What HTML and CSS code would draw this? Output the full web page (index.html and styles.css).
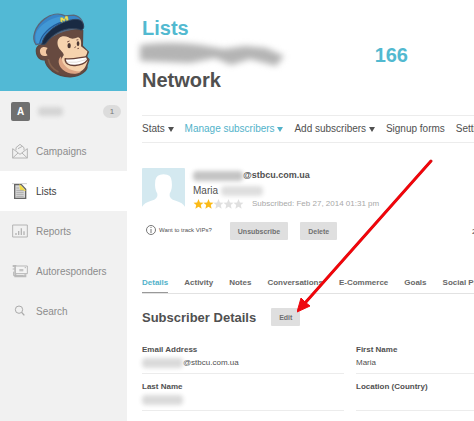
FILE: index.html
```html
<!DOCTYPE html>
<html lang="en">
<head>
	<meta charset="UTF-8">
	<title>Lists</title>
	<link rel="stylesheet" href="styles.css">
</head>
<body>

<div class="page">

	<!-- Sidebar -->
	<div class="sidebar">
		<div class="logo">
			<svg viewBox="0 0 384 276" role="img" aria-label="Logo">
				<!-- head and ear -->
				<path d="M137 134C121 132 109 140 110 155C111 174 124 184 136 180C139 207 170 231 211 232C245 233 265 211 263 198L269 180L261 172L267 157L249 139L250 92C218 82 153 99 137 134Z" fill="#674a40" stroke="#5b4741" stroke-width="4" stroke-linejoin="round"/>
				<path d="M144 145C130 137 119 145 121 157C122 168 133 173 144 167C137 161 137 153 144 145Z" fill="#f3c8a3"/>
				<path d="M174 133C172 112 190 105 207 113C218 121 226 116 236 113C246 116 246 129 245 140L264 155C264 164 259 169 257 172L267 181C261 190 262 202 250 212C232 229 203 220 191 203C179 189 186 176 193 166C190 153 176 151 174 133Z" fill="#f6d3ae"/>
				<path d="M184 171C174 179 175 198 190 211C207 227 235 226 246 216C222 218 201 208 190 190Z" fill="#dda584"/>
				<!-- mouth -->
				<path d="M197 177C215 181 239 174 262 171L265 181C258 190 246 197 227 198C208 199 196 192 197 177Z" fill="#fff" stroke="#654036" stroke-width="4" stroke-linejoin="round"/>
				<path d="M201 188Q232 192 261 180" fill="none" stroke="#d8cec6" stroke-width="2"/>
				<!-- eyes and nose -->
				<ellipse cx="209" cy="138" rx="5" ry="8" fill="#4b3733"/>
				<ellipse cx="236" cy="132" rx="4" ry="7" fill="#4b3733"/>
				<path d="M203 127L210 124M231 121L237 120M225 144L230 141M234 147L239 146" stroke="#765045" stroke-width="3" fill="none"/>
				<path d="M146 179Q151 206 177 218" fill="none" stroke="#83604c" stroke-width="5"/>
				<!-- cap -->
				<path d="M109 135C94 117 105 79 135 57C154 43 178 38 197 48L223 46C246 50 258 73 247 88C228 82 160 96 135 131Z" fill="#3785c9" stroke="#59677a" stroke-width="4" stroke-linejoin="round"/>
				<path d="M126 135C130 105 164 76 202 64C222 57 241 56 248 66C260 84 248 95 241 89C202 78 160 99 137 133Z" fill="#192a43" stroke="#33445a" stroke-width="3"/>
				<path d="M112 94C129 68 164 48 194 50L202 61C164 69 132 94 122 130L111 130C106 119 106 106 112 94Z" fill="#4298d5"/>
				<path d="M120 132C123 107 151 78 188 66" fill="none" stroke="#235b98" stroke-width="4"/>
				<path d="M183 66L182 54L188 52L194 58L198 48L205 49L207 61L201 63L199 56L195 65L188 61L189 68Z" fill="#f2df55" stroke="#8b9145" stroke-width="1"/>
			</svg>
		</div>

		<div class="account">
			<span class="initial">A</span>
			<span class="smudge smudge-account"></span>
			<span class="count">1</span>
		</div>

		<nav class="menu">
			<a href="#">
				<svg viewBox="0 0 48 48"><path d="M2 17V45H46V17L24 34ZM2 45L18 30M46 45L30 30M12 22V14L24 4L36 14V22M18 17L31 10" fill="none" stroke="#b4b4b4" stroke-width="3"/></svg>
				Campaigns
			</a>
			<a href="#" class="active">
				<svg viewBox="0 0 48 48"><path d="M0 2H45" stroke="#b5b5b5" stroke-width="2"/><path d="M8 5H28L41 19V46H8Z" fill="#d9d9d9" stroke="#666" stroke-width="4"/><path d="M22 3L42 23H24Z" fill="#f4dc42"/><path d="M13 15H21M13 22H35M13 28H35M13 34H35M13 40H35" stroke="#aaa" stroke-width="3"/></svg>
				Lists
			</a>
			<a href="#">
				<svg viewBox="0 0 48 48"><path d="M2 6H46V42H2Z" fill="none" stroke="#b4b4b4" stroke-width="3"/><path d="M12 36V30M20 36V24M28 36V16M36 36V25" stroke="#b4b4b4" stroke-width="4"/></svg>
				Reports
			</a>
			<a href="#">
				<svg viewBox="0 0 48 48"><path d="M2 9H10V40H40V34" fill="none" stroke="#bbb" stroke-width="6"/><path d="M10 9H46V32H10Z" fill="#f4f4f4" stroke="#b6b6b6" stroke-width="3"/><path d="M22 18H34V25H22Z" fill="#c4c4c4"/><path d="M38 14H42M2 18H8M5 26V38H34" fill="none" stroke="#b6b6b6" stroke-width="3"/></svg>
				Autoresponders
			</a>
			<a href="#">
				<svg viewBox="0 0 48 48"><circle cx="21" cy="20" r="11" fill="none" stroke="#aaa" stroke-width="3"/><path d="M29 28L37 37" stroke="#aaa" stroke-width="4"/></svg>
				Search
			</a>
		</nav>
	</div>

	<!-- Main content -->
	<div class="main">
		<div class="header">
			<h1>
				<a href="#">Lists</a>
				<svg class="smudge-title" viewBox="0 0 150 26" aria-hidden="true">
					<path d="M-2 4Q28 0 58 4L82 8L103 5L124 7L142 15L134 25L108 18L89 24L73 17L48 22L-2 20Z" fill="#b4b4b4"/>
				</svg>
				<span>Network</span>
			</h1>
			<a href="#" class="total">166</a>
		</div>

		<nav class="toolbar">
			<a href="#">Stats <span class="caret"></span></a>
			<a href="#" class="active">Manage subscribers <span class="caret"></span></a>
			<a href="#">Add subscribers <span class="caret"></span></a>
			<a href="#">Signup forms</a>
			<a href="#">Settings</a>
		</nav>

		<div class="profile">
			<svg class="avatar" viewBox="0 0 42 38">
				<rect width="42" height="38" rx="1" fill="#d4e9f0"/>
				<path d="M0 38Q2 34 9 32Q16 30 15 25Q12 21 13 12Q14 6 21 6Q29 6 29 13Q30 21 27 25Q26 30 33 32Q40 34 42 38Z" fill="#fff"/>
			</svg>
			<div class="person">
				<div class="email"><span class="smudge smudge-email"></span>@stbcu.com.ua</div>
				<div class="name">Maria <span class="smudge smudge-name"></span></div>
				<div class="rating">
					<svg class="stars" viewBox="0 0 50 10" role="img" aria-label="2 of 5 stars">
						<defs><path id="star" d="M5 0L6.4 3.4L10 3.7L7.3 6.1L8.1 9.7L5 7.8L1.9 9.7L2.7 6.1L0 3.7L3.6 3.4Z"/></defs>
						<use href="#star" fill="#fbba18"/>
						<use href="#star" x="10" fill="#fbba18"/>
						<use href="#star" x="20" fill="#e0e0e0"/>
						<use href="#star" x="30" fill="#e0e0e0"/>
						<use href="#star" x="40" fill="#e0e0e0"/>
					</svg>
					<span>Subscribed: Feb 27, 2014 01:31 pm</span>
				</div>
			</div>
		</div>

		<div class="actions">
			<a href="#" class="vip">
				<svg viewBox="0 0 10 10"><circle cx="5" cy="5" r="4.5" fill="none" stroke="#777" stroke-width="1"/><path d="M5 2V3M5 4V8" stroke="#777" stroke-width="1"/></svg>
				Want to track VIPs?
			</a>
			<button type="button">Unsubscribe</button>
			<button type="button">Delete</button>
			<a href="#" class="more">2</a>
		</div>

		<nav class="tabs">
			<a href="#" class="active">Details</a>
			<a href="#">Activity</a>
			<a href="#">Notes</a>
			<a href="#">Conversations</a>
			<a href="#">E-Commerce</a>
			<a href="#">Goals</a>
			<a href="#">Social Profile</a>
		</nav>

		<div class="section-title">
			<h2>Subscriber Details</h2>
			<button type="button">Edit</button>
		</div>

		<dl class="fields">
			<div>
				<dt>Email Address</dt>
				<dd><span class="smudge smudge-field"></span>@stbcu.com.ua</dd>
			</div>
			<div>
				<dt>First Name</dt>
				<dd>Maria</dd>
			</div>
			<div>
				<dt>Last Name</dt>
				<dd><span class="smudge smudge-field"></span></dd>
			</div>
			<div>
				<dt>Location (Country)</dt>
				<dd></dd>
			</div>
		</dl>

		<!-- Arrow pointing to the Edit button -->
		<svg class="pointer" viewBox="0 0 136 154" aria-hidden="true">
			<path d="M134 2L8 144" stroke="#cf171b" stroke-width="3" stroke-linecap="round"/>
			<path d="M134 2L8 144" stroke="#f50309" stroke-width="2"/>
			<path d="M0 153L4 139L8 143L13 147Z" fill="#ee0910" stroke="#ee0910" stroke-width="1"/>
		</svg>
	</div>
</div>

</body>
</html>
```
FILE: styles.css
```css
* {
  box-sizing: border-box;
}

body {
  margin: 0;
  background-color: #fff;
  color: #505050;
  font-family: "Liberation Sans", Arial, sans-serif;
  font-size: 10px;
  overflow: hidden;
}

a {
  color: inherit;
  text-decoration: none;
}

h1, h2, dl, dd {
  margin: 0;
}

.page {
  display: flex;
  min-height: 100vh;
}

/* Sidebar */
.sidebar {
  flex: 0 0 127px;
  background-color: #f1f1f1;
}

.logo {
  background-color: #52b9d5;
}

.logo svg {
  display: block;
  width: 100%;
}

.account {
  display: flex;
  align-items: center;
  height: 40px;
  padding: 0 6px 0 11px;
}

.initial {
  width: 19px;
  background-color: #707070;
  border-radius: 2px;
  color: #fff;
  font-weight: bold;
  line-height: 19px;
  text-align: center;
}

.count {
  width: 18px;
  margin-left: auto;
  background-color: #dcdcdc;
  border-radius: 8px;
  color: #777;
  font-size: 8px;
  line-height: 13px;
  text-align: center;
}

.menu a {
  display: flex;
  align-items: center;
  gap: 8px;
  height: 40px;
  padding-left: 12px;
  color: #8c8c8c;
}

.menu svg {
  width: 16px;
  height: 16px;
}

.menu .active {
  background-color: #fff;
  color: #404040;
}

/* Blurred private text */
.smudge {
  display: inline-block;
  background-color: #c4c4c4;
  border-radius: 4px;
  filter: blur(2px);
  vertical-align: middle;
}

.smudge-account {
  width: 25px;
  height: 9px;
  margin-left: 8px;
  background-color: #d4d4d4;
}

.smudge-email {
  width: 50px;
  height: 10px;
}

.smudge-name {
  width: 42px;
  height: 10px;
  background-color: #dedede;
}

.smudge-field {
  width: 41px;
  height: 10px;
  background-color: #dadada;
}

/* Main content */
.main {
  position: relative;
  flex: 1;
  min-width: 0;
  padding-left: 15px;
  overflow: hidden;
}

.header {
  display: flex;
  align-items: center;
  justify-content: space-between;
  height: 115px;
  padding: 0 66px 8px 0;
}

h1 {
  display: flex;
  flex-direction: column;
  font-size: 20px;
  line-height: 26px;
}

h1 a, .total {
  color: #52b9d0;
}

.smudge-title {
  width: 150px;
  height: 26px;
  overflow: visible;
  filter: blur(3px);
}

.total {
  padding-top: 4px;
  font-size: 20px;
  font-weight: bold;
}

.toolbar {
  display: flex;
  gap: 11px;
  border-top: 1px solid #ececec;
  border-bottom: 1px solid #ececec;
  line-height: 26px;
  white-space: nowrap;
}

.caret {
  display: inline-block;
  border: 3px solid transparent;
  border-top: 5px solid currentColor;
  border-bottom: 0;
}

.active {
  color: #52b2ca;
}

.profile {
  display: flex;
  gap: 8px;
  margin-top: 25px;
}

.avatar {
  width: 43px;
  height: 39px;
}

.person {
  white-space: nowrap;
}

.email {
  font-size: 9px;
  font-weight: bold;
  line-height: 15px;
}

.name {
  line-height: 15px;
}

.rating {
  display: flex;
  align-items: center;
  gap: 8px;
  color: #a8a8a8;
  font-size: 8px;
  line-height: 12px;
}

.stars {
  width: 51px;
  height: 10px;
}

.actions {
  display: flex;
  align-items: center;
  gap: 12px;
  margin-top: 12px;
  white-space: nowrap;
}

button {
  height: 18px;
  padding: 0 8px;
  background-color: #dfdfdf;
  border: 0;
  border-radius: 1px;
  color: #707070;
  font: bold 7px "Liberation Sans", Arial, sans-serif;
}

.vip {
  display: flex;
  align-items: center;
  gap: 3px;
  padding: 0 6px 2px 4px;
  font-size: 6px;
}

.vip svg {
  width: 10px;
  height: 10px;
}

.more {
  width: 2px;
  margin-left: auto;
  font-size: 8px;
}

.tabs {
  display: flex;
  gap: 16px;
  margin-top: 34px;
  border-bottom: 1px solid #e2e2e2;
  color: #686868;
  font-size: 8px;
  font-weight: bold;
  line-height: 18px;
  white-space: nowrap;
}

.tabs .active {
  border-bottom: 1px solid #999;
}

.section-title {
  display: flex;
  align-items: center;
  gap: 15px;
  margin-top: 14px;
}

h2 {
  font-size: 13px;
}

.fields {
  display: grid;
  grid-template-columns: 202px 1fr;
  column-gap: 12px;
  margin-top: 11px;
  font-size: 8px;
}

.fields div {
  height: 37px;
  padding-top: 7px;
  border-bottom: 1px solid #ececec;
}

.fields dt {
  font-weight: bold;
  line-height: 12px;
}

.fields dd {
  line-height: 13px;
}

/* Red arrow over the page */
.pointer {
  position: absolute;
  top: 159px;
  left: 170px;
  width: 136px;
  height: 154px;
}
```
